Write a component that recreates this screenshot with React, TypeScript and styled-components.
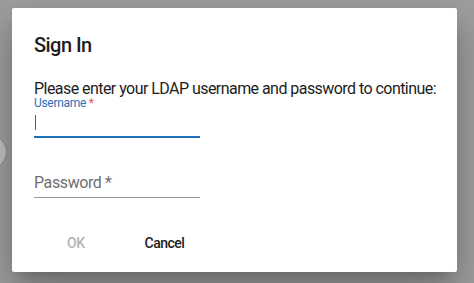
import styled, { createGlobalStyle } from "styled-components"

const Global = createGlobalStyle`
  html, body {
    margin: 0;
    padding: 0;
    background: #9f9f9f;
    font-family: Roboto, "Liberation Sans", sans-serif;
  }
`

const Backdrop = styled.div`
  position: relative;
  width: 474px;
  height: 283px;
  box-sizing: border-box;
  padding: 8px 17px 11px 12px;
  background: #a0a0a0;
  overflow: hidden;
`

// faint round thing peeking out behind the overlay on the left edge
const Peek = styled.div`
  position: absolute;
  left: -26px;
  top: 136px;
  width: 32px;
  height: 32px;
  border-radius: 50%;
  background: #c2c2c2;
  box-shadow: 0 0 2px rgba(0, 0, 0, 0.25);
`

const Dialog = styled.div`
  position: relative;
  height: 100%;
  background: #fff;
  border-radius: 2px;
  box-shadow: 0 11px 15px -7px rgba(0, 0, 0, 0.2), 0 24px 38px 3px rgba(0, 0, 0, 0.14),
    0 9px 46px 8px rgba(0, 0, 0, 0.12);
  padding: 21px 22px 0 22px;
  box-sizing: border-box;
  display: flex;
  flex-direction: column;
`

const Title = styled.h2`
  margin: 0;
  font-size: 20px;
  font-weight: 500;
  line-height: 32px;
  letter-spacing: -0.55px;
  color: #1d1d1d;
`

const Message = styled.p`
  margin: 20px 0 0 0;
  font-size: 16px;
  line-height: 16px;
  letter-spacing: -0.55px;
  white-space: nowrap;
  color: #1d1d1d;
`

const Field = styled.div<{ $focused?: boolean }>`
  position: relative;
  width: 166px;
  height: ${(p) => (p.$focused ? "39px" : "47px")};
  border-bottom: ${(p) => (p.$focused ? "2px solid #1f6fb8" : "1px solid #9a9a9a")};
  margin-top: ${(p) => (p.$focused ? "0" : "12px")};
`

const SmallLabel = styled.label`
  position: absolute;
  left: 0;
  top: 0;
  font-size: 12px;
  line-height: 12px;
  letter-spacing: -0.3px;
  color: #2b71b6;
`

const Star = styled.span`
  color: #f0506e;
`

const Caret = styled.div`
  position: absolute;
  left: 1px;
  top: 18px;
  width: 1px;
  height: 15px;
  background: #1f6fb8;
`

const Placeholder = styled.label`
  position: absolute;
  left: 0;
  bottom: 5px;
  font-size: 16px;
  line-height: 19px;
  letter-spacing: -0.4px;
  color: #6f6f6f;
`

const Actions = styled.div`
  display: flex;
  align-items: center;
  gap: 12px;
  margin-top: 27px;
  padding-left: 9px;
`

const Button = styled.button<{ $disabled?: boolean }>`
  border: none;
  background: none;
  font-family: inherit;
  font-size: 14px;
  font-weight: 500;
  letter-spacing: -0.5px;
  padding: 0 24px;
  min-width: 64px;
  height: 36px;
  color: ${(p) => (p.$disabled ? "#b4b4b4" : "#1d1d1d")};
  cursor: ${(p) => (p.$disabled ? "default" : "pointer")};
`

export default function App() {
  return (
    <>
      <Global />
      <Backdrop>
        <Peek />
        <Dialog>
          <Title>Sign In</Title>
          <Message>Please enter your LDAP username and password to continue:</Message>
          <Field $focused>
            <SmallLabel>
              Username <Star>*</Star>
            </SmallLabel>
            <Caret />
          </Field>
          <Field>
            <Placeholder>Password *</Placeholder>
          </Field>
          <Actions>
            <Button $disabled>OK</Button>
            <Button>Cancel</Button>
          </Actions>
        </Dialog>
      </Backdrop>
    </>
  )
}
